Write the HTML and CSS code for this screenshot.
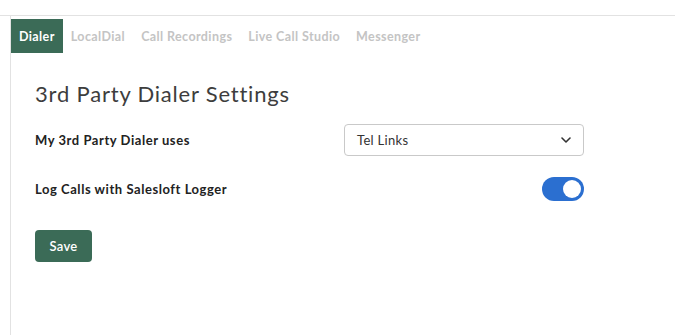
FILE: index.html
```html
<!DOCTYPE html>
<html>
<head>
<meta charset="utf-8">
<link rel="stylesheet" href="styles.css">
</head>
<body>
<div class="topbar"></div>
<div class="frame">
  <div class="main">
    <nav class="tabs">
      <a class="tab active">Dialer</a>
      <a class="tab">LocalDial</a>
      <a class="tab">Call Recordings</a>
      <a class="tab">Live Call Studio</a>
      <a class="tab">Messenger</a>
    </nav>
    <section class="content">
      <h1 class="title">3rd Party Dialer Settings</h1>
      <div class="row">
        <label class="label">My 3rd Party Dialer uses</label>
        <div class="select">
          <span>Tel Links</span>
          <svg class="chev" width="10" height="6" viewBox="0 0 10 6"><path d="M1 1l4 4 4-4" fill="none" stroke="#333" stroke-width="1.6" stroke-linecap="round" stroke-linejoin="round"/></svg>
        </div>
      </div>
      <div class="row row-toggle">
        <label class="label">Log Calls with Salesloft Logger</label>
        <div class="toggle"><div class="knob"></div></div>
      </div>
      <button class="save">Save</button>
    </section>
  </div>
</div>
</body>
</html>
```
FILE: styles.css
```css
html, body { margin: 0; padding: 0; background: #fff; }
body { font-family: Lato, "Liberation Sans", sans-serif; color: #222; width: 675px; height: 335px; overflow: hidden; }
.topbar { height: 15px; border-bottom: 1px solid #e2e2e2; }
.frame { padding-left: 10px; height: 319px; }
.main { border-left: 1px solid #e2e2e2; height: 100%; }
.tabs { display: flex; padding-top: 3px; }
.tab { display: flex; align-items: center; height: 34px; padding: 0 8px; font-size: 12.5px; font-weight: 700; color: #c4c4c4; letter-spacing: 0.4px; }
.tab.active { background: #3b6b57; color: #fff; }
.content { padding: 0 0 0 24px; width: 549px; }
.title { margin: 26px 0 0; font-size: 22px; font-weight: 400; color: #3d3d3d; line-height: 30px; letter-spacing: 0.8px; }
.row { display: flex; justify-content: space-between; align-items: center; margin-top: 15px; }
.label { font-size: 13px; font-weight: 700; color: #222; letter-spacing: 0.55px; }
.select { width: 214px; height: 30px; border: 1px solid #c9c9c9; border-radius: 4px; display: flex; align-items: center; justify-content: space-between; padding: 0 12px; font-size: 13px; color: #333; letter-spacing: 0.3px; }
.row-toggle { margin-top: 21px; }
.toggle { width: 42px; height: 24px; border-radius: 12px; background: #2b6fd0; display: flex; align-items: center; justify-content: flex-end; padding: 0 3px; box-sizing: border-box; }
.knob { width: 18px; height: 18px; border-radius: 50%; background: #fff; }
.save { margin-top: 29px; width: 57px; height: 32px; border: 0; border-radius: 4px; background: #3b6b57; color: #fff; font-family: inherit; font-size: 13px; font-weight: 600; padding: 0; letter-spacing: 0.3px; }
```
